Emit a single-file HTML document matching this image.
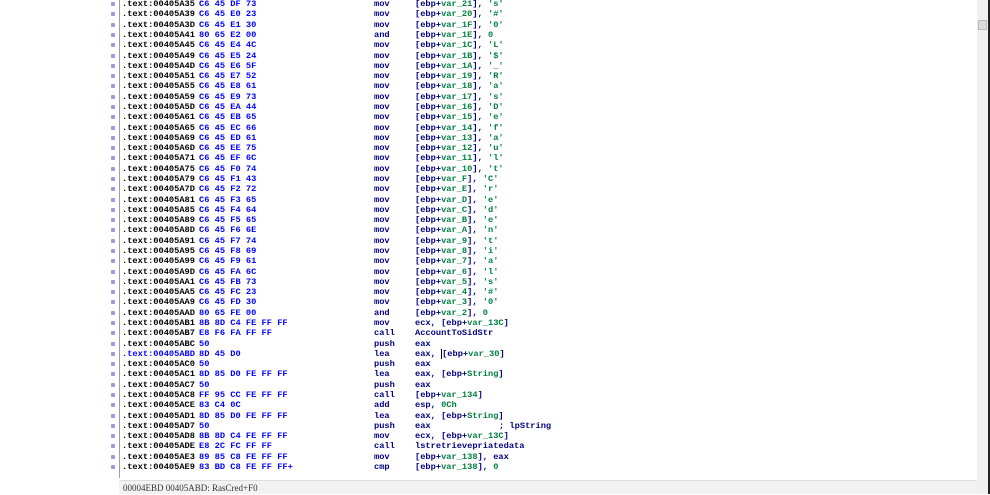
<!DOCTYPE html>
<html><head><meta charset="utf-8"><style>
body{margin:0;width:990px;height:494px;background:#fff;overflow:hidden;position:relative;font-family:"Liberation Mono",monospace;font-size:8.7px;font-weight:bold;}
#g{position:absolute;left:119px;top:0;width:1px;height:478px;background:#a0a0a0}
#sb{position:absolute;left:977px;top:0;width:11px;height:494px;background:#f0f0f0}
#sbe{position:absolute;left:988px;top:0;width:2px;height:494px;background:#222}
#th{position:absolute;left:978px;top:20px;width:9px;height:10px;background:#dcdcdc;border:1px solid #bbb;box-sizing:border-box}
#st{position:absolute;left:119px;top:480px;width:858px;height:14px;background:#f2f2f2;border-top:1px solid #ddd;font-family:"Liberation Serif",serif;font-weight:normal;font-size:9px;color:#333;padding-left:4px;line-height:14px;box-sizing:border-box}
.r{position:absolute;left:0;height:10px;line-height:10px;white-space:pre;width:977px}
.r i{position:absolute;left:111px;top:3px;width:4px;height:4px;background:#9a9ae0;border-radius:1px}
.a{position:absolute;left:122px;color:#000}
.b{position:absolute;left:199px;color:#0000ff}
.m{position:absolute;left:374px;color:#000080}
.o{position:absolute;left:415px;color:#000080}
.c{position:absolute;left:499px;color:#000080}
.v{color:#008040}
.bl{color:#0000ff}
</style></head><body>
<div id="g"></div>
<div class="r" style="top:-1px"><i></i><span class="a">.text:00405A35</span><span class="b">C6 45 DF 73</span><span class="m">mov</span><span class="o">[ebp+<span class="v">var_21</span>], <span class="v">'s'</span></span></div>
<div class="r" style="top:9.3px"><i></i><span class="a">.text:00405A39</span><span class="b">C6 45 E0 23</span><span class="m">mov</span><span class="o">[ebp+<span class="v">var_20</span>], <span class="v">'#'</span></span></div>
<div class="r" style="top:19.6px"><i></i><span class="a">.text:00405A3D</span><span class="b">C6 45 E1 30</span><span class="m">mov</span><span class="o">[ebp+<span class="v">var_1F</span>], <span class="v">'0'</span></span></div>
<div class="r" style="top:29.9px"><i></i><span class="a">.text:00405A41</span><span class="b">80 65 E2 00</span><span class="m">and</span><span class="o">[ebp+<span class="v">var_1E</span>], <span class="v">0</span></span></div>
<div class="r" style="top:40.2px"><i></i><span class="a">.text:00405A45</span><span class="b">C6 45 E4 4C</span><span class="m">mov</span><span class="o">[ebp+<span class="v">var_1C</span>], <span class="v">'L'</span></span></div>
<div class="r" style="top:50.5px"><i></i><span class="a">.text:00405A49</span><span class="b">C6 45 E5 24</span><span class="m">mov</span><span class="o">[ebp+<span class="v">var_1B</span>], <span class="v">'$'</span></span></div>
<div class="r" style="top:60.7px"><i></i><span class="a">.text:00405A4D</span><span class="b">C6 45 E6 5F</span><span class="m">mov</span><span class="o">[ebp+<span class="v">var_1A</span>], <span class="v">'_'</span></span></div>
<div class="r" style="top:71px"><i></i><span class="a">.text:00405A51</span><span class="b">C6 45 E7 52</span><span class="m">mov</span><span class="o">[ebp+<span class="v">var_19</span>], <span class="v">'R'</span></span></div>
<div class="r" style="top:81.3px"><i></i><span class="a">.text:00405A55</span><span class="b">C6 45 E8 61</span><span class="m">mov</span><span class="o">[ebp+<span class="v">var_18</span>], <span class="v">'a'</span></span></div>
<div class="r" style="top:91.6px"><i></i><span class="a">.text:00405A59</span><span class="b">C6 45 E9 73</span><span class="m">mov</span><span class="o">[ebp+<span class="v">var_17</span>], <span class="v">'s'</span></span></div>
<div class="r" style="top:101.9px"><i></i><span class="a">.text:00405A5D</span><span class="b">C6 45 EA 44</span><span class="m">mov</span><span class="o">[ebp+<span class="v">var_16</span>], <span class="v">'D'</span></span></div>
<div class="r" style="top:112.2px"><i></i><span class="a">.text:00405A61</span><span class="b">C6 45 EB 65</span><span class="m">mov</span><span class="o">[ebp+<span class="v">var_15</span>], <span class="v">'e'</span></span></div>
<div class="r" style="top:122.5px"><i></i><span class="a">.text:00405A65</span><span class="b">C6 45 EC 66</span><span class="m">mov</span><span class="o">[ebp+<span class="v">var_14</span>], <span class="v">'f'</span></span></div>
<div class="r" style="top:132.8px"><i></i><span class="a">.text:00405A69</span><span class="b">C6 45 ED 61</span><span class="m">mov</span><span class="o">[ebp+<span class="v">var_13</span>], <span class="v">'a'</span></span></div>
<div class="r" style="top:143px"><i></i><span class="a">.text:00405A6D</span><span class="b">C6 45 EE 75</span><span class="m">mov</span><span class="o">[ebp+<span class="v">var_12</span>], <span class="v">'u'</span></span></div>
<div class="r" style="top:153.3px"><i></i><span class="a">.text:00405A71</span><span class="b">C6 45 EF 6C</span><span class="m">mov</span><span class="o">[ebp+<span class="v">var_11</span>], <span class="v">'l'</span></span></div>
<div class="r" style="top:163.6px"><i></i><span class="a">.text:00405A75</span><span class="b">C6 45 F0 74</span><span class="m">mov</span><span class="o">[ebp+<span class="v">var_10</span>], <span class="v">'t'</span></span></div>
<div class="r" style="top:173.9px"><i></i><span class="a">.text:00405A79</span><span class="b">C6 45 F1 43</span><span class="m">mov</span><span class="o">[ebp+<span class="v">var_F</span>], <span class="v">'C'</span></span></div>
<div class="r" style="top:184.2px"><i></i><span class="a">.text:00405A7D</span><span class="b">C6 45 F2 72</span><span class="m">mov</span><span class="o">[ebp+<span class="v">var_E</span>], <span class="v">'r'</span></span></div>
<div class="r" style="top:194.5px"><i></i><span class="a">.text:00405A81</span><span class="b">C6 45 F3 65</span><span class="m">mov</span><span class="o">[ebp+<span class="v">var_D</span>], <span class="v">'e'</span></span></div>
<div class="r" style="top:204.8px"><i></i><span class="a">.text:00405A85</span><span class="b">C6 45 F4 64</span><span class="m">mov</span><span class="o">[ebp+<span class="v">var_C</span>], <span class="v">'d'</span></span></div>
<div class="r" style="top:215px"><i></i><span class="a">.text:00405A89</span><span class="b">C6 45 F5 65</span><span class="m">mov</span><span class="o">[ebp+<span class="v">var_B</span>], <span class="v">'e'</span></span></div>
<div class="r" style="top:225.3px"><i></i><span class="a">.text:00405A8D</span><span class="b">C6 45 F6 6E</span><span class="m">mov</span><span class="o">[ebp+<span class="v">var_A</span>], <span class="v">'n'</span></span></div>
<div class="r" style="top:235.6px"><i></i><span class="a">.text:00405A91</span><span class="b">C6 45 F7 74</span><span class="m">mov</span><span class="o">[ebp+<span class="v">var_9</span>], <span class="v">'t'</span></span></div>
<div class="r" style="top:245.9px"><i></i><span class="a">.text:00405A95</span><span class="b">C6 45 F8 69</span><span class="m">mov</span><span class="o">[ebp+<span class="v">var_8</span>], <span class="v">'i'</span></span></div>
<div class="r" style="top:256.2px"><i></i><span class="a">.text:00405A99</span><span class="b">C6 45 F9 61</span><span class="m">mov</span><span class="o">[ebp+<span class="v">var_7</span>], <span class="v">'a'</span></span></div>
<div class="r" style="top:266.5px"><i></i><span class="a">.text:00405A9D</span><span class="b">C6 45 FA 6C</span><span class="m">mov</span><span class="o">[ebp+<span class="v">var_6</span>], <span class="v">'l'</span></span></div>
<div class="r" style="top:276.8px"><i></i><span class="a">.text:00405AA1</span><span class="b">C6 45 FB 73</span><span class="m">mov</span><span class="o">[ebp+<span class="v">var_5</span>], <span class="v">'s'</span></span></div>
<div class="r" style="top:287px"><i></i><span class="a">.text:00405AA5</span><span class="b">C6 45 FC 23</span><span class="m">mov</span><span class="o">[ebp+<span class="v">var_4</span>], <span class="v">'#'</span></span></div>
<div class="r" style="top:297.3px"><i></i><span class="a">.text:00405AA9</span><span class="b">C6 45 FD 30</span><span class="m">mov</span><span class="o">[ebp+<span class="v">var_3</span>], <span class="v">'0'</span></span></div>
<div class="r" style="top:307.6px"><i></i><span class="a">.text:00405AAD</span><span class="b">80 65 FE 00</span><span class="m">and</span><span class="o">[ebp+<span class="v">var_2</span>], <span class="v">0</span></span></div>
<div class="r" style="top:317.9px"><i></i><span class="a">.text:00405AB1</span><span class="b">8B 8D C4 FE FF FF</span><span class="m">mov</span><span class="o">ecx, [ebp+<span class="v">var_13C</span>]</span></div>
<div class="r" style="top:328.2px"><i></i><span class="a">.text:00405AB7</span><span class="b">E8 F6 FA FF FF</span><span class="m">call</span><span class="o">AccountToSidStr</span></div>
<div class="r" style="top:338.5px"><i></i><span class="a">.text:00405ABC</span><span class="b">50</span><span class="m">push</span><span class="o">eax</span></div>
<div class="r" style="top:348.8px"><i></i><span class="a bl">.text:00405ABD</span><span class="b">8D 45 D0</span><span class="m">lea</span><span class="o">eax, <span style="border-left:1px solid #000">[</span>ebp+<span class="v">var_30</span>]</span></div>
<div class="r" style="top:359px"><i></i><span class="a">.text:00405AC0</span><span class="b">50</span><span class="m">push</span><span class="o">eax</span></div>
<div class="r" style="top:369.3px"><i></i><span class="a">.text:00405AC1</span><span class="b">8D 85 D0 FE FF FF</span><span class="m">lea</span><span class="o">eax, [ebp+<span class="v">String</span>]</span></div>
<div class="r" style="top:379.6px"><i></i><span class="a">.text:00405AC7</span><span class="b">50</span><span class="m">push</span><span class="o">eax</span></div>
<div class="r" style="top:389.9px"><i></i><span class="a">.text:00405AC8</span><span class="b">FF 95 CC FE FF FF</span><span class="m">call</span><span class="o">[ebp+<span class="v">var_134</span>]</span></div>
<div class="r" style="top:400.2px"><i></i><span class="a">.text:00405ACE</span><span class="b">83 C4 0C</span><span class="m">add</span><span class="o">esp, <span class="v">0Ch</span></span></div>
<div class="r" style="top:410.5px"><i></i><span class="a">.text:00405AD1</span><span class="b">8D 85 D0 FE FF FF</span><span class="m">lea</span><span class="o">eax, [ebp+<span class="v">String</span>]</span></div>
<div class="r" style="top:420.8px"><i></i><span class="a">.text:00405AD7</span><span class="b">50</span><span class="m">push</span><span class="o">eax</span><span class="c">; lpString</span></div>
<div class="r" style="top:431px"><i></i><span class="a">.text:00405AD8</span><span class="b">8B 8D C4 FE FF FF</span><span class="m">mov</span><span class="o">ecx, [ebp+<span class="v">var_13C</span>]</span></div>
<div class="r" style="top:441.3px"><i></i><span class="a">.text:00405ADE</span><span class="b">E8 2C FC FF FF</span><span class="m">call</span><span class="o">lstretrievepriatedata</span></div>
<div class="r" style="top:451.6px"><i></i><span class="a">.text:00405AE3</span><span class="b">89 85 C8 FE FF FF</span><span class="m">mov</span><span class="o">[ebp+<span class="v">var_138</span>], eax</span></div>
<div class="r" style="top:461.9px"><i></i><span class="a">.text:00405AE9</span><span class="b">83 BD C8 FE FF FF+</span><span class="m">cmp</span><span class="o">[ebp+<span class="v">var_138</span>], <span class="v">0</span></span></div>
<div id="st">00004EBD 00405ABD: RasCred+F0</div>
<div id="sb"></div><div id="th"></div><div id="sbe"></div>
</body></html>
